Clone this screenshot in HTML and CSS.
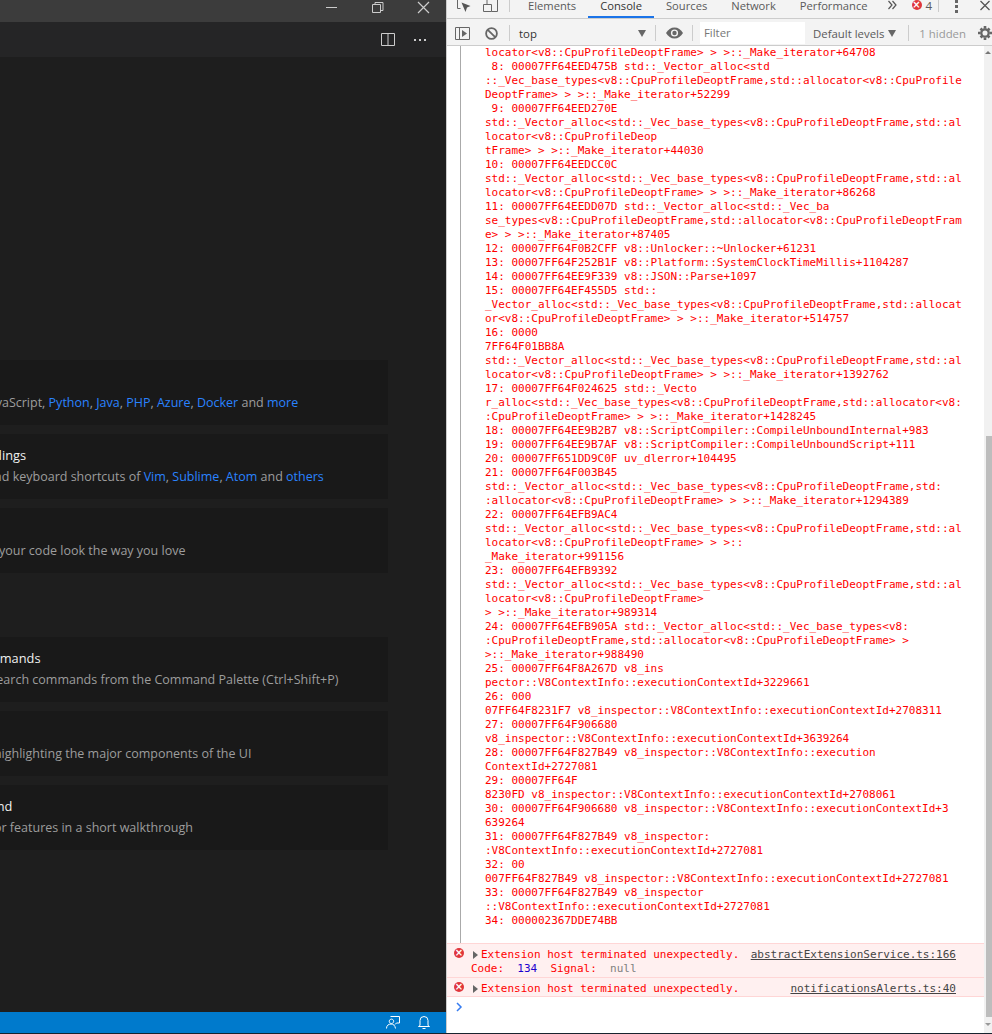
FILE: index.html
```html
<!DOCTYPE html>
<html lang="en">
<head>
    <meta charset="UTF-8">
    <meta name="viewport" content="width=device-width, initial-scale=1.0">
    <title>Extension host terminated</title>
    <link rel="stylesheet" href="styles.css">
</head>
<body>

<div class="workbench">
    <div class="title-bar">
        <svg width="46" height="22" viewBox="0 0 46 22"><path d="M18 7.500h11" stroke="#ccc" fill="none"/></svg>
        <svg width="46" height="22" viewBox="0 0 46 22"><path d="M18.500 4.500h8v8h-8zM21 4.500v-2h8v8h-2.500" stroke="#ccc" fill="none"/></svg>
        <svg width="46" height="22" viewBox="0 0 46 22"><path d="M18 2l11 11M29 2L18 13" stroke="#ccc" stroke-width="1.200" fill="none"/></svg>
    </div>
    <div class="tab-bar">
        <svg width="14" height="13" viewBox="0 0 14 13"><path d="M.5 .5h13v12H.5zM7 .5v12" stroke="#ccc" fill="none"/></svg>
        <svg width="12" height="14" viewBox="0 0 12 14"><path d="M0 6h2v2H0zM5 6h2v2H5zM10 6h2v2h-2z" fill="#ccc"/></svg>
    </div>
    <div class="welcome">
        <div class="section">
            <div class="card">
                <h3>Tools and languages</h3>
                <p>Install support for JavaScript, <a>Python</a>, <a>Java</a>, <a>PHP</a>, <a>Azure</a>, <a>Docker</a> and <a>more</a></p>
            </div>
            <div class="card">
                <h3>Settings and keybindings</h3>
                <p>Install the settings and keyboard shortcuts of <a>Vim</a>, <a>Sublime</a>, <a>Atom</a> and <a>others</a></p>
            </div>
            <div class="card">
                <h3>Color theme</h3>
                <p>Make the editor and your code look the way you love</p>
            </div>
        </div>
        <div class="section">
            <div class="card">
                <h3>Find and run all commands</h3>
                <p>Rapidly access and search commands from the Command Palette (Ctrl+Shift+P)</p>
            </div>
            <div class="card">
                <h3>Interface overview</h3>
                <p>Get a visual overlay highlighting the major components of the UI</p>
            </div>
            <div class="card">
                <h3>Interactive playground</h3>
                <p>Trying essential editor features in a short walkthrough</p>
            </div>
        </div>
    </div>
    <div class="status-bar">
        <svg width="14" height="13" viewBox="0 0 14 13"><path d="M4.500 .5h9v6.500h-3l-1.500 1.500M5.500 7.500a2.200 2.200 0 1 0-.1 0zM.5 12.500c0-3 2-4.500 4.500-4.500s4 1.500 4.500 4.500" stroke="#fff" fill="none"/></svg>
        <svg width="12" height="13" viewBox="0 0 12 13"><path d="M2 9.500V4.500a4 4 0 0 1 8 0v5l1.500 1H.5zM4.500 12.500h3" stroke="#fff" fill="none"/></svg>
    </div>
</div>

<div class="devtools">
    <div class="dev-tabs">
        <svg class="inspect" width="14" height="18" viewBox="0 0 14 18"><path d="M.5 0v8.500h3" stroke="#666" fill="none"/><path d="M4.500 2.500l9 3.500-3.500 1.500L8.500 12z" fill="#555"/></svg>
        <svg class="device" width="15" height="18" viewBox="0 0 15 18"><path d="M.5 4.500h8v7h-8zM4 0v4.500M8.500 11.500h6V0" stroke="#666" fill="none"/></svg>
        <span class="sep"></span>
        <span class="dev-tab first">Elements</span>
        <span class="dev-tab active">Console</span>
        <span class="dev-tab">Sources</span>
        <span class="dev-tab">Network</span>
        <span class="dev-tab">Performance</span>
        <svg class="more" width="9" height="18" viewBox="0 0 9 18"><path d="M.5 1l3.500 4-3.500 4M4.500 1L8 5 4.500 9" stroke="#555" stroke-width="1.200" fill="none"/></svg>
        <span class="err-count"><span class="err-dot">×</span>4</span>
        <span class="sep tight"></span>
        <svg class="dots" width="3" height="18" viewBox="0 0 3 18"><path d="M0 0h3v3H0zM0 5h3v3H0zM0 10h3v3H0z" fill="#666"/></svg>
        <svg class="close" width="10" height="18" viewBox="0 0 10 18"><path d="M.5 1l9 9M9.500 1l-9 9" stroke="#555" stroke-width="1.300"/></svg>
    </div>
    <div class="dev-toolbar">
        <svg class="panel" width="15" height="13" viewBox="0 0 15 13"><path d="M.5 .5h14v12H.5zM4.500 .5v12" stroke="#666" fill="none"/><path d="M7 3l5 3.500L7 10z" fill="#666"/></svg>
        <svg class="clear" width="13" height="13" viewBox="0 0 13 13"><circle cx="6.500" cy="6.500" r="5.400" stroke="#666" stroke-width="1.800" fill="none"/><path d="M2.800 2.800l7.400 7.400" stroke="#666" stroke-width="1.800"/></svg>
        <span class="sep"></span>
        <div class="context">top<span class="caret"></span></div>
        <span class="sep"></span>
        <svg class="eye" width="17" height="12" viewBox="0 0 17 12"><path d="M0 6c2-3.500 5-5.500 8.500-5.500S15 2.500 17 6c-2 3.500-5 5.500-8.500 5.500S2 9.500 0 6z" fill="#666"/><circle cx="8.500" cy="6" r="3.600" fill="#f3f3f3"/><circle cx="8.500" cy="6" r="2.200" fill="#666"/></svg>
        <span class="sep"></span>
        <div class="filter">Filter</div>
        <div class="levels">Default levels<span class="caret"></span></div>
        <span class="sep"></span>
        <span class="hidden-count">1 hidden</span>
        <svg class="gear" width="14" height="14" viewBox="0 0 16 16"><circle cx="8" cy="8" r="4.200" stroke="#666" stroke-width="2.600" fill="none"/><path d="M6.500 0h3v3h-3zM6.500 13h3v3h-3zM0 6.500h3v3H0zM13 6.500h3v3h-3zM1.800 3.900l2.100-2.100 2 2-2.100 2.100zM10.100 12.200l2.100-2.100 2 2-2.100 2.100zM12.200 1.800l2.100 2.100-2 2-2.100-2.100zM3.900 10.100l2.100 2.100-2 2-2.100-2.100z" fill="#666"/></svg>
    </div>
    <div class="console">
        <div class="messages">
            <div class="stack-wrap">
<pre class="stack">locator&lt;v8::CpuProfileDeoptFrame&gt; &gt; &gt;::_Make_iterator+64708
 8: 00007FF64EED475B std::_Vector_alloc&lt;std
::_Vec_base_types&lt;v8::CpuProfileDeoptFrame,std::allocator&lt;v8::CpuProfile
DeoptFrame&gt; &gt; &gt;::_Make_iterator+52299
 9: 00007FF64EED270E
std::_Vector_alloc&lt;std::_Vec_base_types&lt;v8::CpuProfileDeoptFrame,std::al
locator&lt;v8::CpuProfileDeop
tFrame&gt; &gt; &gt;::_Make_iterator+44030
10: 00007FF64EEDCC0C
std::_Vector_alloc&lt;std::_Vec_base_types&lt;v8::CpuProfileDeoptFrame,std::al
locator&lt;v8::CpuProfileDeoptFrame&gt; &gt; &gt;::_Make_iterator+86268
11: 00007FF64EEDD07D std::_Vector_alloc&lt;std::_Vec_ba
se_types&lt;v8::CpuProfileDeoptFrame,std::allocator&lt;v8::CpuProfileDeoptFram
e&gt; &gt; &gt;::_Make_iterator+87405
12: 00007FF64F0B2CFF v8::Unlocker::~Unlocker+61231
13: 00007FF64F252B1F v8::Platform::SystemClockTimeMillis+1104287
14: 00007FF64EE9F339 v8::JSON::Parse+1097
15: 00007FF64EF455D5 std::
_Vector_alloc&lt;std::_Vec_base_types&lt;v8::CpuProfileDeoptFrame,std::allocat
or&lt;v8::CpuProfileDeoptFrame&gt; &gt; &gt;::_Make_iterator+514757
16: 0000
7FF64F01BB8A
std::_Vector_alloc&lt;std::_Vec_base_types&lt;v8::CpuProfileDeoptFrame,std::al
locator&lt;v8::CpuProfileDeoptFrame&gt; &gt; &gt;::_Make_iterator+1392762
17: 00007FF64F024625 std::_Vecto
r_alloc&lt;std::_Vec_base_types&lt;v8::CpuProfileDeoptFrame,std::allocator&lt;v8:
:CpuProfileDeoptFrame&gt; &gt; &gt;::_Make_iterator+1428245
18: 00007FF64EE9B2B7 v8::ScriptCompiler::CompileUnboundInternal+983
19: 00007FF64EE9B7AF v8::ScriptCompiler::CompileUnboundScript+111
20: 00007FF651DD9C0F uv_dlerror+104495
21: 00007FF64F003B45
std::_Vector_alloc&lt;std::_Vec_base_types&lt;v8::CpuProfileDeoptFrame,std:
:allocator&lt;v8::CpuProfileDeoptFrame&gt; &gt; &gt;::_Make_iterator+1294389
22: 00007FF64EFB9AC4
std::_Vector_alloc&lt;std::_Vec_base_types&lt;v8::CpuProfileDeoptFrame,std::al
locator&lt;v8::CpuProfileDeoptFrame&gt; &gt; &gt;::
_Make_iterator+991156
23: 00007FF64EFB9392
std::_Vector_alloc&lt;std::_Vec_base_types&lt;v8::CpuProfileDeoptFrame,std::al
locator&lt;v8::CpuProfileDeoptFrame&gt;
&gt; &gt;::_Make_iterator+989314
24: 00007FF64EFB905A std::_Vector_alloc&lt;std::_Vec_base_types&lt;v8:
:CpuProfileDeoptFrame,std::allocator&lt;v8::CpuProfileDeoptFrame&gt; &gt;
&gt;::_Make_iterator+988490
25: 00007FF64F8A267D v8_ins
pector::V8ContextInfo::executionContextId+3229661
26: 000
07FF64F8231F7 v8_inspector::V8ContextInfo::executionContextId+2708311
27: 00007FF64F906680
v8_inspector::V8ContextInfo::executionContextId+3639264
28: 00007FF64F827B49 v8_inspector::V8ContextInfo::execution
ContextId+2727081
29: 00007FF64F
8230FD v8_inspector::V8ContextInfo::executionContextId+2708061
30: 00007FF64F906680 v8_inspector::V8ContextInfo::executionContextId+3
639264
31: 00007FF64F827B49 v8_inspector:
:V8ContextInfo::executionContextId+2727081
32: 00
007FF64F827B49 v8_inspector::V8ContextInfo::executionContextId+2727081
33: 00007FF64F827B49 v8_inspector
::V8ContextInfo::executionContextId+2727081
34: 000002367DDE74BB</pre>
            </div>
            <div class="error-row">
                <span class="err-dot">×</span>
                <div class="error-body">
                    <div class="error-line"><span class="arrow"></span>Extension host terminated unexpectedly.<a class="src">abstractExtensionService.ts:166</a></div>
                    <div class="error-extra">Code:  <span class="num">134</span>  Signal:  <span class="nul">null</span></div>
                </div>
            </div>
            <div class="error-row single">
                <span class="err-dot">×</span>
                <div class="error-body">
                    <div class="error-line"><span class="arrow"></span>Extension host terminated unexpectedly.<a class="src">notificationsAlerts.ts:40</a></div>
                </div>
            </div>
            <div class="prompt"><svg width="7" height="10" viewBox="0 0 7 10"><path d="M1 1l4 4-4 4" stroke="#367cf1" stroke-width="1.500" fill="none"/></svg></div>
        </div>
        <div class="scrollbar">
            <span class="arrow-up"></span>
            <span class="thumb"></span>
            <span class="arrow-down"></span>
        </div>
    </div>
</div>

</body>
</html>
```

FILE: styles.css
```css
* {
    box-sizing: border-box;
}
body {
    margin: 0;
    display: flex;
    height: 1034px;
    padding-bottom: 1px;
    overflow: hidden;
    font-family: "Open Sans", sans-serif;
    background: #17232e;
}

/* left side, vs code window */
.workbench {
    width: 446px;
    flex: none;
    display: flex;
    flex-direction: column;
    background: #1e1e1e;
    overflow: hidden;
}
.title-bar {
    height: 22px;
    flex: none;
    display: flex;
    justify-content: flex-end;
    background: #3c3c3c;
}
.tab-bar {
    height: 35px;
    flex: none;
    display: flex;
    justify-content: flex-end;
    align-items: center;
    gap: 19px;
    padding-right: 20px;
    background: #252526;
}
.welcome {
    flex: 1;
    padding-top: 303px;
}
.section {
    display: flex;
    flex-direction: column;
    gap: 9px;
    margin-bottom: 64px;
}
.card {
    width: 388px;
    height: 65px;
    background: #191919;
    overflow: hidden;
    white-space: nowrap;
}
.card h3 {
    margin: 12px 0 0 -122px;
    font-size: 12.8px;
    line-height: 18px;
    font-weight: 400;
    color: #f0f0f0;
}
.card p {
    margin: 4px 0 0 -122px;
    font-size: 12.5px;
    line-height: 18px;
    color: #9d9d9d;
}
.card a {
    color: #2a83ff;
}
.status-bar {
    height: 21px;
    flex: none;
    display: flex;
    justify-content: flex-end;
    align-items: center;
    gap: 18px;
    padding-right: 16px;
    background: #007acc;
}

/* right side, devtools */
.devtools {
    flex: 1;
    display: flex;
    flex-direction: column;
    min-width: 0;
    background: #fff;
    border-left: 1px solid #ccc;
}
.dev-tabs {
    height: 19px;
    flex: none;
    display: flex;
    align-items: flex-start;
    background: #f3f3f3;
    border-bottom: 1px solid #ccc;
    overflow: hidden;
    font-size: 11.2px;
    color: #5a5a5a;
}
.inspect {
    margin-left: 10px;
    flex: none;
}
.device {
    margin-left: 12px;
    flex: none;
}
.sep {
    width: 1px;
    height: 16px;
    flex: none;
    background: #ccc;
}
.dev-tabs .sep {
    height: 12px;
    margin-left: 11px;
}
.dev-tabs .sep.tight {
    margin-left: 6px;
}
.dev-tab {
    height: 18px;
    line-height: 12px;
    padding: 0 12px;
    white-space: nowrap;
}
.dev-tab.first {
    margin-left: 6px;
}
.dev-tab.active {
    color: #333;
    border-bottom: 2px solid #1a73e8;
}
.more {
    margin-left: 8px;
    flex: none;
}
.err-count {
    margin-left: 15px;
    display: flex;
    gap: 4px;
    line-height: 12px;
    font-size: 11.5px;
}
.err-dot {
    width: 10px;
    height: 10px;
    flex: none;
    display: block;
    border-radius: 50%;
    background: #e0353b;
    color: #fff;
    font: bold 10px/10px "DejaVu Sans", sans-serif;
    text-align: center;
}
.dots {
    margin-left: 16px;
    flex: none;
}
.close {
    margin-left: 22px;
    flex: none;
}
.dev-toolbar {
    height: 27px;
    flex: none;
    display: flex;
    align-items: center;
    padding-top: 2px;
    background: #f3f3f3;
    border-bottom: 1px solid #ccc;
    font-size: 11.4px;
    color: #5a5a5a;
    overflow: hidden;
}
.panel {
    margin-left: 8px;
    flex: none;
}
.clear {
    margin-left: 15px;
    flex: none;
}
.dev-toolbar .sep:first-of-type {
    margin-left: 11px;
}
.context {
    width: 146px;
    display: flex;
    justify-content: space-between;
    align-items: center;
    padding: 0 9px;
    color: #333;
}
.caret {
    width: 0;
    height: 0;
    border-left: 4px solid transparent;
    border-right: 4px solid transparent;
    border-top: 7px solid #666;
}
.eye {
    margin: 0 9px 0 10px;
    flex: none;
}
.filter {
    width: 105px;
    height: 22px;
    flex: none;
    margin-left: 7px;
    padding-left: 4px;
    line-height: 22px;
    background: #fff;
    color: #777;
}
.levels {
    display: flex;
    align-items: center;
    gap: 4px;
    margin: 0 12px 0 8px;
    white-space: nowrap;
}
.hidden-count {
    margin-left: 10px;
    color: #999;
    white-space: nowrap;
}
.gear {
    margin-left: 12px;
    flex: none;
}
.console {
    flex: 1;
    min-height: 0;
    display: flex;
    font-family: "DejaVu Sans Mono", monospace;
    font-size: 11px;
    line-height: 14px;
}
.messages {
    flex: 1;
    min-width: 0;
}
.stack-wrap {
    height: 897px;
    margin-left: 13px;
    padding-left: 24px;
    border-left: 1px solid #aaa;
}
.stack {
    margin: 0;
    font: inherit;
    color: #f00;
    white-space: pre;
}
.error-row {
    display: flex;
    height: 34px;
    padding: 4px 0 0 7px;
    background: #fff0f0;
    border-top: 1px solid #ffd6d6;
    color: #f00;
}
.error-row.single {
    height: 19px;
}
.error-body {
    flex: 1;
    min-width: 0;
}
.error-line {
    display: flex;
    align-items: center;
    padding-left: 9px;
    white-space: pre;
}
.arrow {
    width: 0;
    height: 0;
    margin-right: 3px;
    border-top: 4px solid transparent;
    border-bottom: 4px solid transparent;
    border-left: 5px solid #666;
}
.src {
    margin-left: auto;
    margin-right: 28px;
    color: #444;
    text-decoration: underline;
}
.error-extra {
    margin-left: 7px;
    white-space: pre;
}
.num {
    color: #1c00cf;
}
.nul {
    color: #808080;
}
.prompt {
    padding: 5px 0 0 9px;
    border-top: 1px solid #ffd6d6;
}
.scrollbar {
    width: 8px;
    flex: none;
    display: flex;
    flex-direction: column;
    align-items: flex-end;
    background: #f1f1f1;
}
.arrow-up {
    margin: 5px 1px 0 0;
    border-left: 3px solid transparent;
    border-right: 3px solid transparent;
    border-bottom: 3px solid #777;
}
.thumb {
    display: block;
    width: 6px;
    height: 581px;
    margin-top: auto;
    background: #bdbdbd;
}
.arrow-down {
    margin: 6px 1px 7px 0;
    border-left: 3px solid transparent;
    border-right: 3px solid transparent;
    border-top: 3px solid #999;
}
```
